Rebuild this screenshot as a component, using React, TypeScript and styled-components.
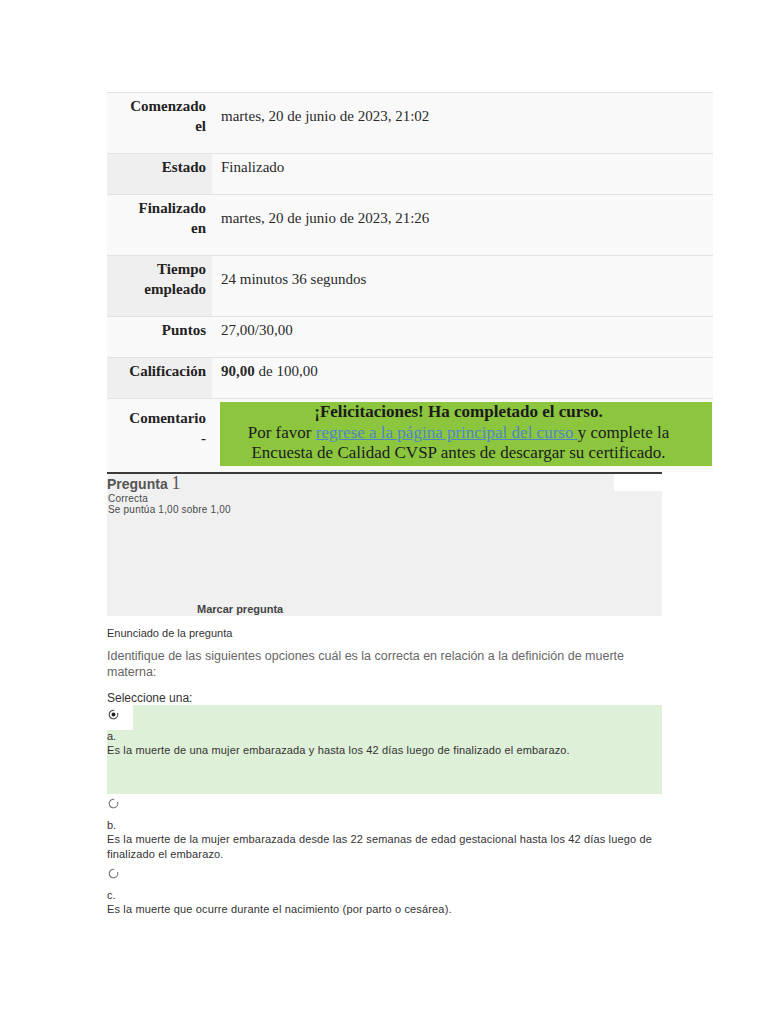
import styled, { createGlobalStyle } from 'styled-components'

const GlobalStyle = createGlobalStyle`
  html, body {
    margin: 0;
    padding: 0;
    background: #ffffff;
  }
  body {
    font-family: 'Liberation Serif', 'Times New Roman', serif;
    color: #222;
  }
`

const Page = styled.div`
  padding: 92px 0 0 107px;
  width: 606px;
`

const SummaryTable = styled.div`
  border-top: 1px solid #e2e2e2;
  font-size: 15px;
  line-height: 20px;
`

const Row = styled.div<{ $last?: boolean }>`
  display: grid;
  grid-template-columns: 105px 1fr;
  border-bottom: ${(p) => (p.$last ? 'none' : '1px solid #e2e2e2')};
`

const Label = styled.div<{ $shade: boolean; $last?: boolean }>`
  display: flex;
  flex-direction: column;
  justify-content: ${(p) => (p.$last ? 'flex-start' : 'center')};
  text-align: right;
  font-weight: bold;
  background: ${(p) => (p.$shade ? '#efefef' : '#f9f9f9')};
  padding: ${(p) => (p.$last ? '9px 6px 4px 0' : '3px 6px 17px 0')};
`

const Value = styled.div<{ $last?: boolean }>`
  display: flex;
  align-items: center;
  background: #f9f9f9;
  padding: ${(p) => (p.$last ? '3px 1px 6px 8px' : '3px 1px 17px 9px')};
  color: #2a2a2a;
`

const Notice = styled.div`
  flex: 1;
  height: 64px;
  box-sizing: border-box;
  background: #8cc63f;
  color: #1b1b1b;
  font-size: 17px;
  line-height: 20.5px;
  text-align: center;
  padding: 0 15px 0 0;

  strong {
    display: block;
  }

  a {
    color: #4f86c6;
    text-decoration: underline;
  }
`

const Question = styled.div`
  width: 555px;
  font-family: 'Liberation Sans', Arial, sans-serif;
`

const Info = styled.div`
  border-top: 2px solid #3a3a3a;
  background: #f0f0f0;
  height: 142px;
  display: flex;
  flex-direction: column;
  color: #555;
`

const InfoHead = styled.div`
  display: flex;
  justify-content: space-between;
  align-items: flex-start;
  height: 19px;
`

const QTitle = styled.h3`
  margin: 0;
  font-family: 'Liberation Sans', Arial, sans-serif;
  font-size: 14px;
  font-weight: bold;
  line-height: 18px;
  color: #555;

  span {
    font-family: 'Liberation Serif', serif;
    font-weight: normal;
    font-size: 18px;
  }
`

const WhiteTab = styled.div`
  width: 48px;
  height: 17px;
  background: #ffffff;
`

const InfoLine = styled.div`
  font-size: 10px;
  line-height: 11px;
  letter-spacing: 0.2px;
  color: #4a4a4a;
  padding-left: 1px;
`

const Flag = styled.div`
  margin-top: auto;
  padding: 0 0 0 90px;
  font-size: 11px;
  font-weight: bold;
  line-height: 14px;
  color: #444;
`

const Prompt = styled.div`
  margin-top: 11px;
  font-size: 11px;
  line-height: 13px;
  color: #333;
`

const QText = styled.p`
  margin: 8px 0 12px;
  font-size: 12.5px;
  line-height: 16px;
  color: #666;
`

const Choose = styled.div`
  font-size: 12px;
  line-height: 13px;
  color: #333;
`

const Option = styled.div<{ $correct?: boolean }>`
  background: ${(p) => (p.$correct ? '#dff0d8' : 'transparent')};
  padding-bottom: ${(p) => (p.$correct ? '36px' : '2px')};
  font-size: 11px;
  color: #333;
`

const RadioBox = styled.div`
  width: 26px;
  height: 25px;
  background: #ffffff;
  padding: 4px 0 0 1px;
  box-sizing: border-box;
`

const Letter = styled.div`
  line-height: 13px;
`

const OptionText = styled.div`
  line-height: 15px;
  letter-spacing: 0.15px;
`

const Radio = ({ checked }: { checked?: boolean }) => (
  <svg width='11' height='11' viewBox='0 0 11 11'>
    <circle
      cx='5.5'
      cy='5.5'
      r='4.3'
      fill='#fff'
      stroke={checked ? '#444' : '#6f6f6f'}
      strokeWidth='1.1'
      strokeDasharray='22 5'
      transform='rotate(-20 5.5 5.5)'
    />
    {checked && <circle cx='5.5' cy='5.5' r='1.9' fill='#222' />}
  </svg>
)

const rows = [
  { label: ['Comenzado', 'el'], value: 'martes, 20 de junio de 2023, 21:02' },
  { label: ['Estado'], value: 'Finalizado' },
  { label: ['Finalizado', 'en'], value: 'martes, 20 de junio de 2023, 21:26' },
  { label: ['Tiempo', 'empleado'], value: '24 minutos 36 segundos' },
  { label: ['Puntos'], value: '27,00/30,00' },
]

const options = [
  { letter: 'a.', text: 'Es la muerte de una mujer embarazada y hasta los 42 días luego de finalizado el embarazo.', checked: true },
  { letter: 'b.', text: 'Es la muerte de la mujer embarazada desde las 22 semanas de edad gestacional hasta los 42 días luego de finalizado el embarazo.' },
  { letter: 'c.', text: 'Es la muerte que ocurre durante el nacimiento (por parto o cesárea).' },
]

const App = () => {
  return (
    <Page>
      <GlobalStyle />
      <SummaryTable>
        {rows.map((row, i) => (
          <Row key={row.value}>
            <Label $shade={i % 2 === 1}>
              {row.label.map((l) => (
                <span key={l}>{l}</span>
              ))}
            </Label>
            <Value>{row.value}</Value>
          </Row>
        ))}
        <Row>
          <Label $shade>Calificación</Label>
          <Value>
            <span>
              <strong>90,00</strong> de 100,00
            </span>
          </Value>
        </Row>
        <Row $last>
          <Label $shade={false} $last>
            <span>Comentario</span>
            <span>-</span>
          </Label>
          <Value $last>
            <Notice>
              <strong>¡Felicitaciones! Ha completado el curso.</strong>
              Por favor <a href='#'>regrese a la página principal del curso </a>y complete la
              <br />
              Encuesta de Calidad CVSP antes de descargar su certificado.
            </Notice>
          </Value>
        </Row>
      </SummaryTable>

      <Question>
        <Info>
          <InfoHead>
            <QTitle>
              Pregunta <span>1</span>
            </QTitle>
            <WhiteTab />
          </InfoHead>
          <InfoLine>Correcta</InfoLine>
          <InfoLine>Se puntúa 1,00 sobre 1,00</InfoLine>
          <Flag>Marcar pregunta</Flag>
        </Info>
        <Prompt>Enunciado de la pregunta</Prompt>
        <QText>
          Identifique de las siguientes opciones cuál es la correcta en relación a la definición de muerte materna:
        </QText>
        <Choose>Seleccione una:</Choose>
        {options.map((o) => (
          <Option key={o.letter} $correct={o.checked}>
            <RadioBox>
              <Radio checked={o.checked} />
            </RadioBox>
            <Letter>{o.letter}</Letter>
            <OptionText>{o.text}</OptionText>
          </Option>
        ))}
      </Question>
    </Page>
  )
}

export default App
